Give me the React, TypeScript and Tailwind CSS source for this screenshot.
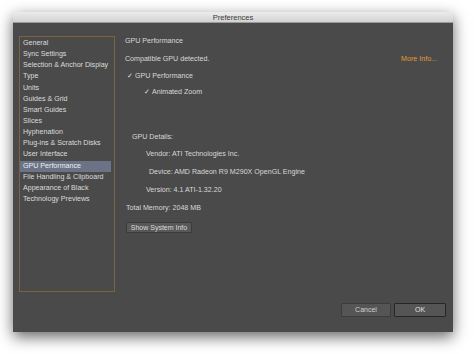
import React from "react";

const SECTIONS = [
  "General",
  "Sync Settings",
  "Selection & Anchor Display",
  "Type",
  "Units",
  "Guides & Grid",
  "Smart Guides",
  "Slices",
  "Hyphenation",
  "Plug-ins & Scratch Disks",
  "User Interface",
  "GPU Performance",
  "File Handling & Clipboard",
  "Appearance of Black",
  "Technology Previews",
];

const Check = () => (
  <span className="inline-block w-[7px] text-[7px] leading-[9px] text-[#e0e0e0]" style={{ fontFamily: '"DejaVu Sans", sans-serif' }}>
    ✓
  </span>
);

const App = () => {
  return (
    <div className="w-[474px] h-[354px] bg-white overflow-hidden pt-[12px] pl-[13px]" style={{ fontFamily: '"Liberation Sans", Arial, sans-serif' }}>
      <div className="w-[440px] h-[320px] flex flex-col bg-[#4a4a4a] shadow-[0_5px_14px_rgba(0,0,0,0.6)]">
        {/* Title bar */}
        <div className="h-[11px] flex items-center justify-center bg-gradient-to-b from-[#ececec] to-[#d2d2d2] border-b border-[#9a9a9a]">
          <span className="text-[7.5px] leading-[9px] text-[#3a3a3a]">Preferences</span>
        </div>

        {/* Body */}
        <div className="flex-1 flex flex-col pl-[6px] pr-[7px] pt-[13px] pb-[15px]">
          <div className="flex h-[256px]">
            {/* Sidebar */}
            <div className="w-[96px] h-[256px] border-[1.5px] border-[#7e6343] pt-[1px] pr-[3px]">
              {SECTIONS.map((s) => (
                <div
                  key={s}
                  className={`h-[11.15px] leading-[11.15px] pl-[3px] text-[7.1px] whitespace-nowrap ${
                    s === "GPU Performance" ? "bg-[#6b7487] text-[#eeeeee]" : "text-[#dcdcdc]"
                  }`}
                >
                  {s}
                </div>
              ))}
            </div>

            {/* Content pane */}
            <div className="flex-1 ml-[10px] pr-[9px] text-[7.1px] leading-[9px] text-[#d8d8d8]">
              <div className="mt-[0.5px] h-[9px]">GPU Performance</div>
              <div className="mt-[9px] h-[9px] flex justify-between">
                <span>Compatible GPU detected.</span>
                <span className="text-[#e39a33]">More Info...</span>
              </div>
              <div className="mt-[8px] h-[9px] pl-[2px] flex">
                <Check />
                <span className="ml-[1px]">GPU Performance</span>
              </div>
              <div className="mt-[7px] h-[9px] pl-[19px] flex">
                <Check />
                <span className="ml-[1px]">Animated Zoom</span>
              </div>
              <div className="mt-[36px] h-[9px] pl-[7px]">GPU Details:</div>
              <div className="mt-[8px] h-[9px] pl-[21px]">Vendor: ATI Technologies Inc.</div>
              <div className="mt-[9px] h-[9px] pl-[24px]">Device: AMD Radeon R9 M290X OpenGL Engine</div>
              <div className="mt-[9px] h-[9px] pl-[21px]">Version: 4.1 ATI-1.32.20</div>
              <div className="mt-[9px] h-[9px] pl-[1px]">Total Memory: 2048 MB</div>
              <div className="mt-[9.5px] pl-[1px]">
                <button className="h-[10.5px] w-[66px] flex items-center justify-center bg-[#585858] border border-[#3a3a3a] rounded-[1px] text-[7px] leading-[9px] text-[#dcdcdc]">
                  Show System Info
                </button>
              </div>
            </div>
          </div>

          {/* Footer buttons */}
          <div className="mt-[11px] flex justify-end gap-[3px]">
            <button className="h-[14px] w-[50px] flex items-center justify-center bg-[#555555] border border-[#3c3c3c] rounded-[1px] text-[7px] text-[#d0d0d0]">
              Cancel
            </button>
            <button className="h-[14px] w-[52px] flex items-center justify-center bg-[#555555] border-[1.5px] border-[#262626] rounded-[1px] text-[7px] text-[#e0e0e0]">
              OK
            </button>
          </div>
        </div>
      </div>
    </div>
  );
};

export default App;
